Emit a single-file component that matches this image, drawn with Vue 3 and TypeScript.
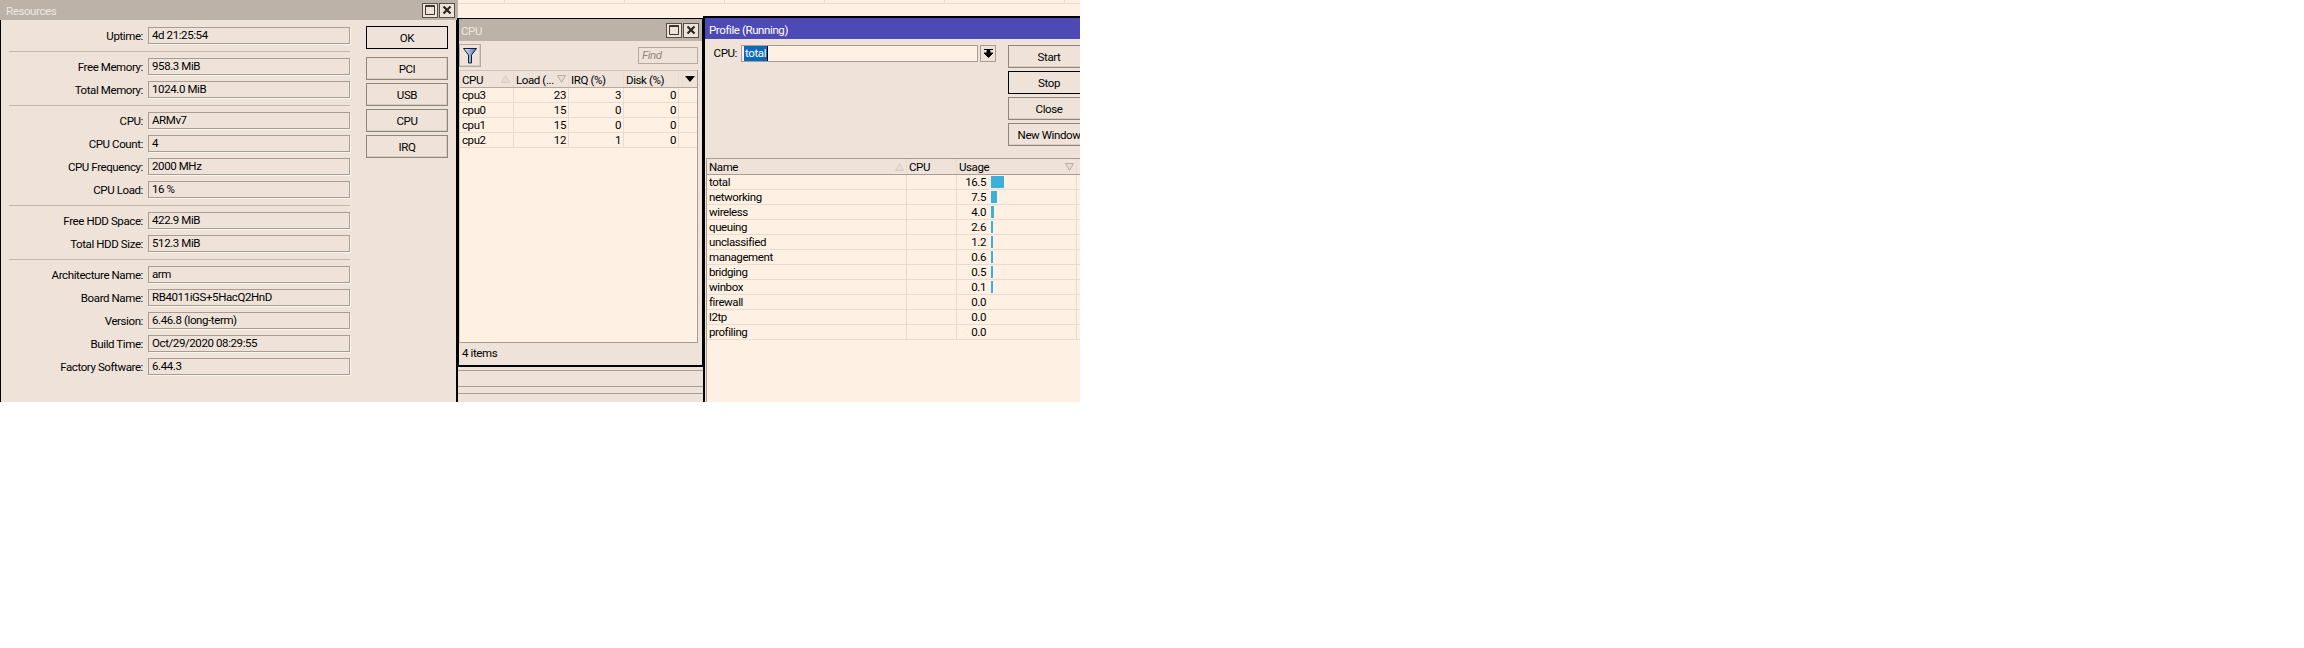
<script setup lang="ts">
type Row = { label: string; value: string }
const groups: Row[][] = [
  [{ label: 'Uptime:', value: '4d 21:25:54' }],
  [{ label: 'Free Memory:', value: '958.3 MiB' }, { label: 'Total Memory:', value: '1024.0 MiB' }],
  [{ label: 'CPU:', value: 'ARMv7' }, { label: 'CPU Count:', value: '4' }, { label: 'CPU Frequency:', value: '2000 MHz' }, { label: 'CPU Load:', value: '16 %' }],
  [{ label: 'Free HDD Space:', value: '422.9 MiB' }, { label: 'Total HDD Size:', value: '512.3 MiB' }],
  [{ label: 'Architecture Name:', value: 'arm' }, { label: 'Board Name:', value: 'RB4011iGS+5HacQ2HnD' }, { label: 'Version:', value: '6.46.8 (long-term)' }, { label: 'Build Time:', value: 'Oct/29/2020 08:29:55' }, { label: 'Factory Software:', value: '6.44.3' }],
]
const sideButtons = ['PCI', 'USB', 'CPU', 'IRQ']
const cpuRows = [
  ['cpu3', 23, 3, 0],
  ['cpu0', 15, 0, 0],
  ['cpu1', 15, 0, 0],
  ['cpu2', 12, 1, 0],
]
const profileRows: { name: string; usage: string; bar: number }[] = [
  { name: 'total', usage: '16.5', bar: 13 },
  { name: 'networking', usage: '7.5', bar: 6 },
  { name: 'wireless', usage: '4.0', bar: 3 },
  { name: 'queuing', usage: '2.6', bar: 2 },
  { name: 'unclassified', usage: '1.2', bar: 2 },
  { name: 'management', usage: '0.6', bar: 2 },
  { name: 'bridging', usage: '0.5', bar: 2 },
  { name: 'winbox', usage: '0.1', bar: 2 },
  { name: 'firewall', usage: '0.0', bar: 0 },
  { name: 'l2tp', usage: '0.0', bar: 0 },
  { name: 'profiling', usage: '0.0', bar: 0 },
]
const profileButtons = ['Start', 'Stop', 'Close', 'New Window']
</script>

<template>
  <div class="desk">
    <div class="back-top">
      <div class="back-row">
        <span class="back-cell w47"></span><span class="back-cell w120"></span><span class="back-cell w100"></span><span class="back-cell w100"></span><span class="back-cell w120"></span><span class="back-cell w120"></span>
      </div>
    </div>
    <div class="back-bottom">
      <div class="b1"></div>
      <div class="b2"></div>
      <div class="b3"></div>
    </div>

    <section class="win win-res">
      <header class="title inactive">
        <span class="title-text">Resources</span>
        <span class="tbtn"><svg width="10" height="10" viewBox="0 0 10 10"><path d="M.5 .5h9v9h-9z M.5 1.5h9" fill="none" stroke="#3a342e" stroke-width="1"/></svg></span>
        <span class="tbtn"><svg width="10" height="10" viewBox="0 0 10 10"><path d="M1.5 1.5l7 7M8.5 1.5l-7 7" stroke="#2a2622" stroke-width="2.2"/></svg></span>
      </header>
      <div class="res-body">
        <div class="res-form">
          <template v-for="(group, gi) in groups" :key="gi">
            <div v-if="gi > 0" class="sep"></div>
            <div v-for="row in group" :key="row.label" class="res-row">
              <label class="res-label">{{ row.label }}</label>
              <div class="field">{{ row.value }}</div>
            </div>
          </template>
        </div>
        <div class="res-buttons">
          <button class="btn default">OK</button>
          <div class="btn-stack">
            <button v-for="b in sideButtons" :key="b" class="btn">{{ b }}</button>
          </div>
        </div>
      </div>
    </section>

    <section class="win win-cpu">
      <header class="title inactive cpu-title">
        <span class="title-text">CPU</span>
        <span class="tbtn"><svg width="10" height="10" viewBox="0 0 10 10"><path d="M.5 .5h9v9h-9z M.5 1.5h9" fill="none" stroke="#3a342e" stroke-width="1"/></svg></span>
        <span class="tbtn"><svg width="10" height="10" viewBox="0 0 10 10"><path d="M1.5 1.5l7 7M8.5 1.5l-7 7" stroke="#2a2622" stroke-width="2.2"/></svg></span>
      </header>
      <div class="cpu-tools">
        <button class="filter">
          <svg width="14" height="16" viewBox="0 0 14 16">
            <defs>
              <linearGradient id="fg" x1="0" y1="0" x2="1" y2="0">
                <stop offset="0" stop-color="#e8eefc" />
                <stop offset="1" stop-color="#4a6fc0" />
              </linearGradient>
            </defs>
            <path d="M.5 .5h13L8.5 7v8h-3V7z" fill="url(#fg)" stroke="#14202e" stroke-width="1" />
          </svg>
        </button>
        <div class="find">Find</div>
      </div>
      <div class="cpu-list">
        <div class="cpu-row cpu-head">
          <span class="c c-name">CPU<svg class="sort s-up" width="9" height="8" viewBox="0 0 9 8"><path d="M4.5 .5L8.5 7.5H.5z" fill="#e8dcd2" stroke="#d8ccc2"/></svg></span>
          <span class="c c-num">Load (...<svg class="sort" width="9" height="8" viewBox="0 0 9 8"><path d="M.5 .5H8.5L4.5 7.5z" fill="#e8dcd2" stroke="#b8aea4"/></svg></span>
          <span class="c c-num">IRQ (%)</span>
          <span class="c c-num">Disk (%)</span>
          <span class="c c-gap"></span>
          <span class="c c-menu"><svg width="10" height="6" viewBox="0 0 10 6"><path d="M0 0h10L5 6z" fill="#000"/></svg></span>
        </div>
        <div v-for="r in cpuRows" :key="r[0]" class="cpu-row cpu-data">
          <span class="c c-name">{{ r[0] }}</span>
          <span class="c c-num right">{{ r[1] }}</span>
          <span class="c c-num right">{{ r[2] }}</span>
          <span class="c c-num right">{{ r[3] }}</span>
          <span class="c c-rest"></span>
        </div>
      </div>
      <div class="status">4 items</div>
    </section>

    <section class="win win-prof">
      <header class="title active">
        <span class="title-text">Profile (Running)</span>
        <span class="tbtn prof-max"><svg width="10" height="10" viewBox="0 0 10 10"><path d="M.5 .5h9v9h-9z M.5 1.5h9" fill="none" stroke="#3a342e" stroke-width="1"/></svg></span>
        <span class="tbtn"></span>
      </header>
      <div class="prof-top">
        <div class="prof-form">
          <label class="prof-label">CPU:</label>
          <div class="combo"><span class="sel">total</span><span class="caret"></span></div>
          <span class="combo-btn"><svg width="9" height="9" viewBox="0 0 9 9"><path d="M0 .5h9M3 1.5h3V4h3L4.5 8.5 0 4h3z" fill="#000" stroke="#000" stroke-width="1"/></svg></span>
        </div>
        <div class="prof-buttons">
          <button v-for="b in profileButtons" :key="b" class="btn" :class="{ default: b === 'Stop' }">{{ b }}</button>
        </div>
      </div>
      <div class="prof-list">
        <div class="p-row p-head">
          <span class="p p-name">Name<svg class="sort" width="9" height="8" viewBox="0 0 9 8"><path d="M4.5 .5L8.5 7.5H.5z" fill="#e8dcd2" stroke="#d8ccc2"/></svg></span>
          <span class="p p-cpu">CPU</span>
          <span class="p p-use">Usage<svg class="sort" width="9" height="8" viewBox="0 0 9 8"><path d="M.5 .5H8.5L4.5 7.5z" fill="#e8dcd2" stroke="#b8aea4"/></svg></span>
        </div>
        <div v-for="r in profileRows" :key="r.name" class="p-row p-data">
          <span class="p p-name">{{ r.name }}</span>
          <span class="p p-cpu"></span>
          <span class="p p-use usage">
            <span class="num">{{ r.usage }}</span>
            <span v-if="r.bar" class="bar" :style="{ width: r.bar + 'px' }"></span>
          </span>
        </div>
      </div>
    </section>
  </div>
</template>

<style>
html, body { margin: 0; background: #fff; }
</style>

<style scoped>
.desk {
  position: relative;
  width: 1080px;
  height: 402px;
  overflow: hidden;
  background: #fef0e3;
  font-family: Roboto, "Liberation Sans", Arial, sans-serif;
  font-size: 11.5px;
  letter-spacing: -0.4px;
  line-height: 14px;
  color: #000;
}
button { font: inherit; letter-spacing: inherit; color: inherit; padding: 0; margin: 0; }

.back-top { position: absolute; left: 458px; top: 0; width: 622px; height: 20px; }
.back-row { display: flex; height: 3px; border-bottom: 1px solid #e8dcd2; }
.back-cell { display: block; height: 3px; border-right: 1px solid #e8dcd2; box-sizing: border-box; flex: none; }
.w47 { width: 47px; } .w120 { width: 120px; } .w100 { width: 100px; }

.back-bottom { position: absolute; left: 458px; top: 367px; width: 246px; height: 35px; background: #efe3d9; }
.b1 { height: 3px; border-bottom: 1px solid #a79d92; }
.b2 { height: 15px; border-bottom: 1px solid #a79d92; }
.b3 { height: 6px; border-bottom: 1px solid #a79d92; }

.win { position: absolute; box-sizing: border-box; background: #efe3d9; }
.title { display: flex; align-items: center; flex: none; box-sizing: border-box; }
.inactive { background: #bcb2a8; color: #efe8e0; }
.active { background: #4e4ab5; color: #fff; }
.title-text { flex: 1; white-space: nowrap; padding-top: 2px; }
.tbtn {
  width: 16px; height: 15px; box-sizing: border-box; flex: none;
  display: flex; align-items: center; justify-content: center;
  background: #efe3d9; border: 1px solid #57504a;
  margin-left: 1px;
}

.win-res { left: 0; top: 0; width: 458px; height: 402px; display: flex; flex-direction: column; }
.win-res .title { height: 20px; padding: 0 3px 0 6px; }
.res-body {
  flex: 1; display: flex; align-items: flex-start; gap: 16px;
  border-left: 1px solid #000; border-right: 2px solid #000;
  padding: 7px 0 0 8px;
}
.res-form { width: 341px; display: flex; flex-direction: column; gap: 6px; flex: none; }
.sep { height: 1px; margin-top: 1px; background: #c3b9ae; }
.res-row { display: flex; gap: 5px; height: 17px; align-items: center; }
.res-label { width: 134px; text-align: right; flex: none; white-space: nowrap; }
.field {
  flex: 1; height: 17px; box-sizing: border-box; line-height: 15px;
  border: 1px solid #a79d92; padding-left: 3px;
  box-shadow: 1px 1px 0 #fbf5ef;
  white-space: nowrap;
}
.res-buttons { width: 82px; margin-top: -1px; display: flex; flex-direction: column; gap: 8px; flex: none; }
.btn-stack { display: flex; flex-direction: column; gap: 3px; }
.btn {
  display: block; width: 82px; height: 23px; box-sizing: border-box; flex: none;
  background: #efe3d9; text-align: center;
  border: 1px solid #8f867c; border-bottom-width: 1px;
  box-shadow: inset -1px -1px 0 #d9cdc2;
}
.btn.default { border-color: #000; box-shadow: none; }

.win-cpu {
  left: 457px; top: 18px; width: 246px; height: 349px;
  border: solid #000; border-width: 1px 1px 2px 2px;
  display: flex; flex-direction: column;
}
.win-cpu .title { height: 22px; padding: 0 3px 0 2px; }
.cpu-tools { height: 29px; flex: none; display: flex; justify-content: space-between; align-items: flex-start; padding: 3px 4px 0 0; box-sizing: border-box; }
.filter {
  width: 22px; height: 23px; box-sizing: border-box; flex: none;
  background: #efe3d9; border: 1px solid #b3a99e; box-shadow: inset -1px -1px 0 #d9cdc2;
  display: flex; align-items: center; justify-content: center;
}
.find {
  width: 60px; height: 17px; box-sizing: border-box; margin-top: 3px;
  border: 1px solid #b3a99e; font-style: italic; color: #8f867c; padding-left: 3px; line-height: 15px;
}
.cpu-list {
  height: 273px; flex: none; box-sizing: border-box; margin-right: 4px;
  background: #fef0e3; border-right: 1px solid #a79d92; border-bottom: 1px solid #a79d92;
  border-left: 1px solid #d9cdc2;
}
.cpu-row { display: flex; box-sizing: border-box; border-bottom: 1px solid #e8dcd2; }
.cpu-head { height: 18px; background: #efe3d9; border-top: 1px solid #cfc5ba; border-bottom: 1px solid #b3a99e; line-height: 18px; }
.cpu-data { height: 15px; line-height: 14px; }
.c { position: relative; box-sizing: border-box; border-right: 1px solid #e8dcd2; padding-left: 2px; flex: none; white-space: nowrap; }
.c-name { width: 54px; }
.c-num { width: 55px; }
.c-gap { width: 4px; padding: 0; }
.c-menu { flex: 1; padding: 0; display: flex; align-items: center; justify-content: center; border-right: none; }
.c-rest { flex: 1; border-right: none; }
.right { text-align: right; padding-right: 2px; }
.sort { position: absolute; right: 2px; top: 4px; }
.s-up { right: 3px; }
.status { flex: 1; padding: 3px 0 0 3px; }

.win-prof {
  left: 703px; top: 16px; width: 420px; height: 386px;
  border-left: 2px solid #000; border-top: 2px solid #000;
  display: flex; flex-direction: column;
}
.win-prof .title { height: 21px; padding: 1px 4px 0; }
.prof-max { margin-right: 1px; }
.prof-top { height: 119px; flex: none; display: flex; box-sizing: border-box; padding-top: 6px; }
.prof-form { width: 303px; flex: none; display: flex; align-items: flex-start; }
.prof-label { width: 32px; margin-right: 4px; text-align: right; flex: none; padding-top: 1px; }
.combo {
  width: 237px; height: 17px; box-sizing: border-box;
  background: #fef0e3; border: 1px solid #a79d92; display: flex; align-items: stretch; padding-left: 2px;
}
.sel { background: #0a68bd; color: #fff; line-height: 15px; padding: 0 1px; }
.caret { width: 1px; background: #000; }
.combo-btn {
  width: 16px; height: 17px; box-sizing: border-box; margin-left: 2px; flex: none;
  border: 1px solid #a79d92; display: flex; align-items: center; justify-content: center;
}
.prof-buttons { display: flex; flex-direction: column; gap: 3px; }
.prof-list { flex: 1; margin-left: 1px; width: 380px; border-left: 1px solid #a79d92; background: #fef0e3; }
.p-row { display: flex; box-sizing: border-box; border-bottom: 1px solid #e8dcd2; }
.p-head { height: 17px; background: #efe3d9; border-top: 1px solid #a79d92; border-bottom: 1px solid #a79d92; line-height: 16px; }
.p-data { height: 15px; line-height: 14px; }
.p { position: relative; box-sizing: border-box; border-right: 1px solid #e8dcd2; padding-left: 2px; flex: none; white-space: nowrap; }
.p-name { width: 200px; }
.p-cpu { width: 50px; }
.p-use { width: 120px; }
.usage { display: flex; align-items: center; padding-left: 0; }
.num { width: 29px; text-align: right; flex: none; }
.bar { height: 12px; background: #3bb0da; margin-left: 5px; display: block; }
</style>
